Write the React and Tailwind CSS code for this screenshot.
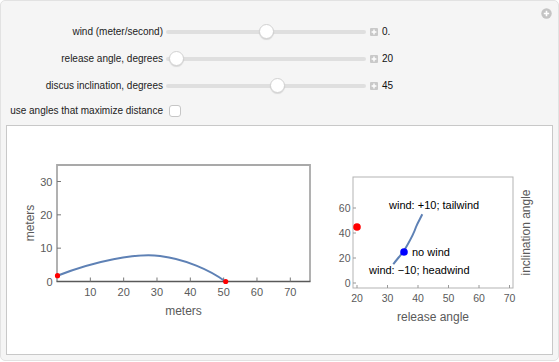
import React from "react";

function PlusBox() {
  return (
    <svg width="8" height="8" viewBox="0 0 8 8" className="block">
      <rect x="0" y="0" width="8" height="8" rx="1" fill="#c9c9c9" />
      <path d="M4 1.6V6.4M1.6 4H6.4" stroke="#fff" strokeWidth="1.4" />
    </svg>
  );
}

function Slider({ center }) {
  return (
    <div className="relative ml-[3px] flex h-[15px] w-[200px] items-center">
      <div className="h-[4px] w-full rounded-full bg-[#dfdfdf]" />
      <div
        className="absolute top-0 h-[15px] w-[15px] rounded-full border border-[#d2d2d2] bg-white shadow-[0_1px_1px_rgba(0,0,0,0.12)]"
        style={{ left: `${center - 7.5}px` }}
      />
    </div>
  );
}

function Row({ label, center, value }) {
  return (
    <div className="flex h-[27px] items-center">
      <div className="w-[157px] text-right text-[10px] leading-none text-[#222]">{label}</div>
      <Slider center={center} />
      <div className="ml-[4px]">
        <PlusBox />
      </div>
      <div className="ml-[4px] text-[10px] leading-none text-[#111]">{value}</div>
    </div>
  );
}

function LeftPlot() {
  const xt = [10, 20, 30, 40, 50, 60, 70];
  const yt = [0, 10, 20, 30];
  const X = (v) => 57 + v * 3.333;
  const Y = (v) => 281.5 - v * 3.333;
  return (
    <svg width="313" height="228" viewBox="7 126 313 228" className="block shrink-0">
      <path d="M57 281.5V165H310V281.5" fill="none" stroke="#a9a9a9" strokeWidth="1.8" />
      <path d="M56.5 281.5H310.5" stroke="#595959" strokeWidth="1.3" />
      {xt.map((v) => (
        <g key={v}>
          <path d={`M${X(v)} 281.5V277.5`} stroke="#777" strokeWidth="1" />
          <text x={X(v)} y="295.5" textAnchor="middle" fontSize="11" fill="#5a5a5a">{v}</text>
        </g>
      ))}
      {yt.map((v) => (
        <g key={v}>
          {v > 0 && <path d={`M57 ${Y(v)}H61`} stroke="#777" strokeWidth="1" />}
          <text x="52.5" y={Y(v) + 4} textAnchor="end" fontSize="11" fill="#5a5a5a">{v}</text>
        </g>
      ))}
      <text x="183.5" y="315" textAnchor="middle" fontSize="12" fill="#5a5a5a">meters</text>
      <text
        x="0"
        y="0"
        transform="translate(33.5 223) rotate(-90)"
        textAnchor="middle"
        fontSize="12"
        fill="#5a5a5a"
      >
        meters
      </text>
      <path
        d="M57.3 275.7C95 261 135 253 160 256C185 259 210 270 225.5 281.5"
        fill="none"
        stroke="#5e81b5"
        strokeWidth="2"
      />
      <circle cx="57.5" cy="275.7" r="2.6" fill="#ff0000" />
      <circle cx="225.7" cy="281.5" r="2.6" fill="#ff0000" />
    </svg>
  );
}

function RightPlot() {
  const xt = [20, 30, 40, 50, 60, 70];
  const yt = [0, 20, 40, 60];
  const X = (v) => 357 + (v - 20) * 3.05;
  const Y = (v) => 283 - v * 1.25;
  return (
    <svg width="232" height="228" viewBox="320 126 232 228" className="block shrink-0">
      <rect x="353" y="177" width="160" height="111" fill="none" stroke="#b3b3b3" strokeWidth="1" />
      {xt.map((v) => (
        <g key={v}>
          <path d={`M${X(v)} 288V285`} stroke="#999" strokeWidth="1" />
          <text x={X(v)} y="301.5" textAnchor="middle" fontSize="10.5" fill="#5a5a5a">{v}</text>
        </g>
      ))}
      {yt.map((v) => (
        <g key={v}>
          <path d={`M353 ${Y(v)}H356`} stroke="#999" strokeWidth="1" />
          <text x="350.5" y={Y(v) + 3.8} textAnchor="end" fontSize="10.5" fill="#5a5a5a">{v}</text>
        </g>
      ))}
      <text x="433" y="321" textAnchor="middle" fontSize="12" fill="#5a5a5a">release angle</text>
      <text
        x="0"
        y="0"
        transform="translate(530 232.5) rotate(-90)"
        textAnchor="middle"
        fontSize="12"
        fill="#5a5a5a"
      >
        inclination angle
      </text>
      <path
        d="M393.3 264.3C397 259 402 254 405 249C409 242 413 236 416 227C418 222 420 219 422.3 214.3"
        fill="none"
        stroke="#5e81b5"
        strokeWidth="2"
      />
      <circle cx="357" cy="227" r="3.8" fill="#ff0000" />
      <circle cx="404" cy="252" r="3.8" fill="#0000ff" />
      <text x="389" y="209" fontSize="11" fill="#000">wind: +10; tailwind</text>
      <text x="412" y="256" fontSize="11" fill="#000">no wind</text>
      <text x="369" y="274" fontSize="11" fill="#000">wind: −10; headwind</text>
    </svg>
  );
}

export default function App() {
  return (
    <div className="h-[362px] w-[559px] bg-white font-['Liberation_Sans',Arial,sans-serif]">
      <div className="relative h-[361px] w-[559px] rounded-[5px] border border-[#e2e2e2] bg-[#f5f5f5] px-[5px] pt-[17px]">
        <svg
          width="11"
          height="11"
          viewBox="0 0 11 11"
          className="absolute right-[6px] top-[7px]"
        >
          <circle cx="5.5" cy="5.5" r="5.2" fill="#c4c4c4" />
          <path d="M5.5 2.8V8.2M2.8 5.5H8.2" stroke="#fff" strokeWidth="1.6" />
        </svg>
        <Row label="wind (meter/second)" center={100} value="0." />
        <Row label="release angle, degrees" center={10} value="20" />
        <Row label="discus inclination, degrees" center={111} value="45" />
        <div className="flex h-[24px] items-center">
          <div className="w-[157px] text-right text-[10px] leading-none text-[#222]">
            use angles that maximize distance
          </div>
          <div className="ml-[6px] h-[12px] w-[12px] rounded-[3px] border border-[#c6c6c6] bg-white" />
        </div>
        <div className="mt-[2px] flex h-[230px] border border-[#c8c8c8] bg-white">
          <LeftPlot />
          <RightPlot />
        </div>
      </div>
    </div>
  );
}
